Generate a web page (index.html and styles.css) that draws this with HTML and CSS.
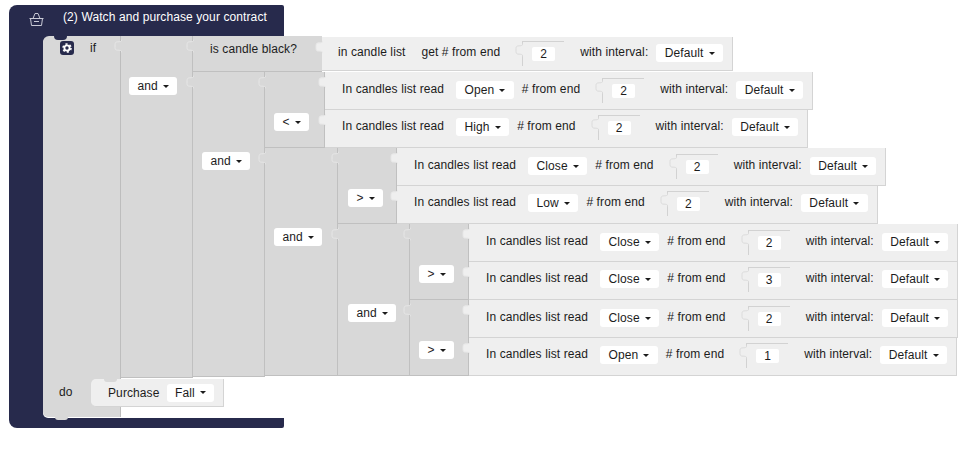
FILE: index.html
```html
<!DOCTYPE html>
<html lang="en">
<head>
<meta charset="UTF-8">
<meta name="viewport" content="width=device-width, initial-scale=1.0">
<title>Watch and purchase</title>
<link rel="stylesheet" href="styles.css">
</head>
<body>
    <svg class="defs" width="0" height="0">
        <symbol id="tab" viewBox="0 0 8 14">
            <path d="M8 .5C8 3.5 4 2.5 2.5 3C1 3.5 1 4.5 1 7C1 9.5 1 10.5 2.5 11C4 11.5 8 10.5 8 13.5"/>
        </symbol>
    </svg>

    <div class="hat">
        <div class="hat-title">
            <svg class="basket" width="15" height="13" viewBox="0 0 15 13">
                <path d="M.5 5.5H14.5M1.5 5.5L2.5 12.5H12.5L13.5 5.5M4 5.5L6 .5H9L11 5.5M5 8.5H10"/>
            </svg>
            <span>(2) Watch and purchase your contract</span>
        </div>

        <div class="hat-body">
            <div class="if-block">
                <span class="notch-top"></span>
                <div class="if-head">
                    <svg class="gear" width="14" height="14" viewBox="0 0 14 14">
                        <rect width="14" height="14" rx="3"/>
                        <circle class="gear-teeth" cx="7" cy="7" r="4"/>
                        <circle class="gear-ring" cx="7" cy="7" r="2.6"/>
                    </svg>
                    <span class="if-label">if</span>
                </div>
                <div class="do-row">
                    <span class="do-label">do</span>
                    <div class="purchase">
                        <span class="notch-purchase"></span>
                        <span>Purchase</span>
                        <span class="field">Fall<i class="arrow"></i></span>
                    </div>
                </div>
                <span class="bump-bottom"></span>
            </div>

            <div class="logic">
                <div class="op op-and op-first block">
                    <svg class="tab"><use href="#tab"/></svg>
                    <span class="field">and<i class="arrow"></i></span>
                </div>
                <div class="operands pad-bottom">
                    <div class="top-row">
                        <div class="question block">
                            <svg class="tab"><use href="#tab"/></svg>
                            is candle black?
                        </div>
                        <div class="list-row candle-row block">
                            <svg class="tab"><use href="#tab"/></svg>
                            <span class="label-gap">in candle list</span>
                            <span>get # from end</span>
                            <span class="num"><svg class="tab"><use href="#tab"/></svg><b>2</b></span>
                            <span>with interval:</span>
                            <span class="field">Default<i class="arrow"></i></span>
                        </div>
                    </div>

                    <div class="logic">
                        <div class="op op-and op-low block">
                            <svg class="tab"><use href="#tab"/></svg>
                            <span class="field">and<i class="arrow"></i></span>
                        </div>
                        <div class="operands pad-bottom">
                            <div class="logic">
                                <div class="op op-cmp op-wide block">
                                    <svg class="tab"><use href="#tab"/></svg>
                                    <span class="field">&lt;<i class="arrow"></i></span>
                                </div>
                                <div class="operands">
                                    <div class="list-row block">
                                        <svg class="tab"><use href="#tab"/></svg>
                                        <span>In candles list read</span>
                                        <span class="field">Open<i class="arrow"></i></span>
                                        <span># from end</span>
                                        <span class="num"><svg class="tab"><use href="#tab"/></svg><b>2</b></span>
                                        <span>with interval:</span>
                                        <span class="field">Default<i class="arrow"></i></span>
                                    </div>
                                    <div class="list-row block">
                                        <svg class="tab"><use href="#tab"/></svg>
                                        <span>In candles list read</span>
                                        <span class="field">High<i class="arrow"></i></span>
                                        <span># from end</span>
                                        <span class="num"><svg class="tab"><use href="#tab"/></svg><b>2</b></span>
                                        <span>with interval:</span>
                                        <span class="field">Default<i class="arrow"></i></span>
                                    </div>
                                </div>
                            </div>

                            <div class="logic">
                                <div class="op op-and op-low op-wide block">
                                    <svg class="tab"><use href="#tab"/></svg>
                                    <span class="field">and<i class="arrow"></i></span>
                                </div>
                                <div class="operands">
                                    <div class="logic">
                                        <div class="op op-cmp op-inset block">
                                            <svg class="tab"><use href="#tab"/></svg>
                                            <span class="field">&gt;<i class="arrow"></i></span>
                                        </div>
                                        <div class="operands">
                                            <div class="list-row block">
                                                <svg class="tab"><use href="#tab"/></svg>
                                                <span>In candles list read</span>
                                                <span class="field">Close<i class="arrow"></i></span>
                                                <span># from end</span>
                                                <span class="num"><svg class="tab"><use href="#tab"/></svg><b>2</b></span>
                                                <span>with interval:</span>
                                                <span class="field">Default<i class="arrow"></i></span>
                                            </div>
                                            <div class="list-row block">
                                                <svg class="tab"><use href="#tab"/></svg>
                                                <span>In candles list read</span>
                                                <span class="field">Low<i class="arrow"></i></span>
                                                <span># from end</span>
                                                <span class="num"><svg class="tab"><use href="#tab"/></svg><b>2</b></span>
                                                <span>with interval:</span>
                                                <span class="field">Default<i class="arrow"></i></span>
                                            </div>
                                        </div>
                                    </div>

                                    <div class="logic">
                                        <div class="op op-and op-low op-inset block">
                                            <svg class="tab"><use href="#tab"/></svg>
                                            <span class="field">and<i class="arrow"></i></span>
                                        </div>
                                        <div class="operands">
                                            <div class="logic">
                                                <div class="op op-cmp block">
                                                    <svg class="tab"><use href="#tab"/></svg>
                                                    <span class="field">&gt;<i class="arrow"></i></span>
                                                </div>
                                                <div class="operands">
                                                    <div class="list-row block">
                                                        <svg class="tab"><use href="#tab"/></svg>
                                                        <span>In candles list read</span>
                                                        <span class="field">Close<i class="arrow"></i></span>
                                                        <span># from end</span>
                                                        <span class="num"><svg class="tab"><use href="#tab"/></svg><b>2</b></span>
                                                        <span>with interval:</span>
                                                        <span class="field">Default<i class="arrow"></i></span>
                                                    </div>
                                                    <div class="list-row block">
                                                        <svg class="tab"><use href="#tab"/></svg>
                                                        <span>In candles list read</span>
                                                        <span class="field">Close<i class="arrow"></i></span>
                                                        <span># from end</span>
                                                        <span class="num"><svg class="tab"><use href="#tab"/></svg><b>3</b></span>
                                                        <span>with interval:</span>
                                                        <span class="field">Default<i class="arrow"></i></span>
                                                    </div>
                                                </div>
                                            </div>
                                            <div class="logic">
                                                <div class="op op-cmp block">
                                                    <svg class="tab"><use href="#tab"/></svg>
                                                    <span class="field">&gt;<i class="arrow"></i></span>
                                                </div>
                                                <div class="operands">
                                                    <div class="list-row block">
                                                        <svg class="tab"><use href="#tab"/></svg>
                                                        <span>In candles list read</span>
                                                        <span class="field">Close<i class="arrow"></i></span>
                                                        <span># from end</span>
                                                        <span class="num"><svg class="tab"><use href="#tab"/></svg><b>2</b></span>
                                                        <span>with interval:</span>
                                                        <span class="field">Default<i class="arrow"></i></span>
                                                    </div>
                                                    <div class="list-row block">
                                                        <svg class="tab"><use href="#tab"/></svg>
                                                        <span>In candles list read</span>
                                                        <span class="field">Open<i class="arrow"></i></span>
                                                        <span># from end</span>
                                                        <span class="num"><svg class="tab"><use href="#tab"/></svg><b>1</b></span>
                                                        <span>with interval:</span>
                                                        <span class="field">Default<i class="arrow"></i></span>
                                                    </div>
                                                </div>
                                            </div>
                                        </div>
                                    </div>
                                </div>
                            </div>
                        </div>
                    </div>
                </div>
            </div>
        </div>

        <div class="hat-foot"></div>
    </div>
</body>
</html>
```

FILE: styles.css
```css
body {
    font-family: "Liberation Sans", Arial, sans-serif;
    font-size: 12px;
    letter-spacing: 0.1px;
    white-space: nowrap;
    color: #1c1c1c;
    background-color: #fff;
    margin: 0;
    padding: 0;
}

.defs {
    position: absolute;
}

/* dark hat block round everything */
.hat {
    width: 275px;
    margin: 5px 0 0 9px;
}

.hat-title {
    display: flex;
    align-items: center;
    height: 31px;
    padding-bottom: 7px;
    box-sizing: border-box;
    background-color: #272a4c;
    border-radius: 8px 2px 0 0;
    color: #fff;
}

.basket {
    margin: 5px 19px 0 20px;
    fill: none;
    stroke: #c9cad6;
    stroke-width: 1;
}

.hat-body {
    display: flex;
    align-items: flex-start;
    height: 382px;
    padding-left: 34px;
    background: linear-gradient(90deg, #272a4c 42px, transparent 42px);
}

.hat-foot {
    height: 10px;
    background-color: #272a4c;
    border-radius: 0 0 2px 8px;
}

/* if / do block */
.if-block {
    position: relative;
    display: flex;
    flex-direction: column;
    justify-content: space-between;
    flex: none;
    width: 77px;
    height: 381px;
    background-color: #d8d8d8;
    border-right: 1px solid #bdbdbd;
    border-radius: 6px 0 0 5px;
    box-shadow: 0 1px 0 #fff;
}

.notch-top {
    position: absolute;
    left: 11px;
    top: 0;
    width: 13px;
    height: 4px;
    background-color: #272a4c;
    border-radius: 0 0 6px 6px;
}

.bump-bottom {
    position: absolute;
    left: 12px;
    bottom: -3px;
    width: 13px;
    height: 3px;
    background-color: #d8d8d8;
    border-radius: 0 0 6px 6px;
}

.if-head {
    display: flex;
    align-items: center;
    padding: 5px 0 0 17px;
}

.gear {
    flex: none;
    fill: #272a4c;
}

.gear-teeth {
    fill: none;
    stroke: #fff;
    stroke-width: 1.6;
    stroke-dasharray: 2.1 2.1;
}

.gear-ring {
    fill: none;
    stroke: #fff;
    stroke-width: 1.8;
}

.if-label {
    margin-left: 16px;
}

.do-row {
    display: flex;
    align-items: center;
    padding: 0 0 10px 16px;
}

.do-label {
    width: 32px;
    flex: none;
    margin-bottom: 2px;
}

.purchase {
    position: relative;
    display: flex;
    align-items: center;
    flex: none;
    gap: 7px;
    height: 27px;
    padding: 0 9px 0 17px;
    background-color: #efefef;
    border-bottom: 1px solid #d4d4d4;
    border-right: 1px solid #d4d4d4;
    border-radius: 5px 0 0 5px;
}

.notch-purchase {
    position: absolute;
    left: 13px;
    top: 0;
    width: 13px;
    height: 3px;
    background-color: #d8d8d8;
    border-radius: 0 0 6px 6px;
}

/* nested logic blocks */
.logic {
    display: flex;
}

.operands {
    display: flex;
    flex-direction: column;
    align-items: flex-start;
}

.pad-bottom {
    padding-bottom: 1px;
}

.block {
    position: relative;
    flex: none;
    box-sizing: border-box;
}

.tab {
    position: absolute;
    left: -7px;
    top: 3px;
    width: 8px;
    height: 14px;
    fill: inherit;
    stroke: #e8e8e8;
    stroke-width: 1;
}

.op {
    background-color: #d8d8d8;
    fill: #d8d8d8;
    border-right: 1px solid #c0c0c0;
    border-bottom: 1px solid #c0c0c0;
    padding: 41px 0 0 9px;
}

.op-and {
    width: 72px;
}

.op-first {
    padding-left: 8px;
}

.op-low {
    padding-top: 80px;
}

.op-cmp {
    width: 59px;
}

.op-and.op-wide {
    width: 73px;
}

.op-cmp.op-wide {
    width: 60px;
}

.op-inset {
    padding-left: 10px;
}

.field {
    display: inline-flex;
    align-items: center;
    justify-content: center;
    gap: 5px;
    height: 18px;
    padding: 0 8.5px;
    background-color: #fff;
    border-radius: 3px;
}

.arrow {
    width: 0;
    height: 0;
    border-left: 3px solid transparent;
    border-right: 3px solid transparent;
    border-top: 3px solid #1c1c1c;
}

.top-row {
    display: flex;
    align-items: flex-start;
    height: 36px;
}

.question {
    width: 129px;
    height: 36px;
    padding: 6px 0 0 17px;
    background-color: #d8d8d8;
    fill: #d8d8d8;
    border-bottom: 1px solid #c0c0c0;
}

.list-row {
    display: flex;
    align-items: center;
    height: 38px;
    padding: 0 9px 1px 17px;
    background-color: #efefef;
    fill: #efefef;
    border-right: 1px solid #d4d4d4;
    border-bottom: 1px solid #d4d4d4;
}

/* second row of a pair sits one pixel higher */
.operands > .list-row:last-child {
    padding-bottom: 3px;
}

.list-row > span {
    margin-bottom: 2px;
}

.list-row .field {
    margin: 0 8px 0 12px;
}

.list-row .field:last-child {
    margin: 0 0 0 8px;
}

.candle-row {
    height: 34px;
    margin-top: 1px;
    padding-left: 16px;
}

.list-row .label-gap {
    margin-right: 16px;
}

.list-row .num {
    position: relative;
    display: flex;
    align-items: center;
    flex: none;
    height: 25px;
    width: 42px;
    box-sizing: border-box;
    margin: 0 16px 0 22px;
    padding-left: 9px;
    border-top: 1px solid #d2d2d2;
    border-left: 1px solid #d2d2d2;
    fill: #efefef;
}

.num .tab {
    left: -8px;
    top: 1px;
    stroke: #dcdcdc;
}

.num b {
    width: 23px;
    height: 14px;
    line-height: 14px;
    text-align: center;
    font-weight: normal;
    background-color: #fff;
    border-radius: 2px;
}
```
